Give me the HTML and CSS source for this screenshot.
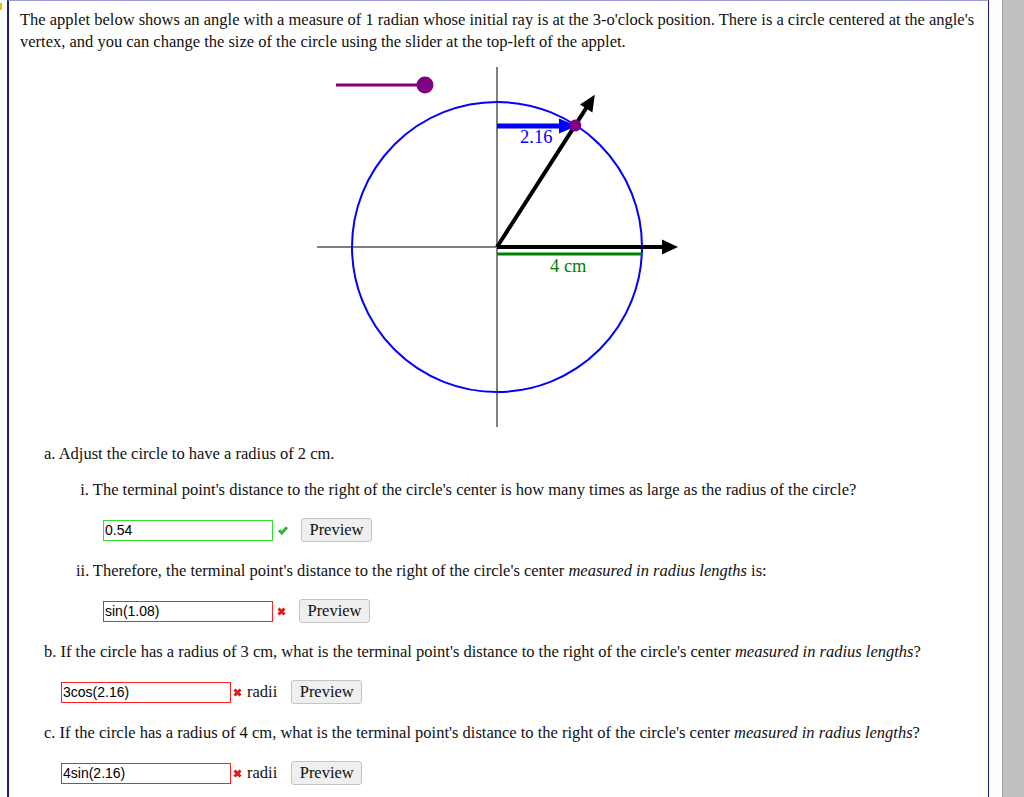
FILE: index.html
```html
<!DOCTYPE html>
<html>
<head>
<meta charset="utf-8">
<link rel="stylesheet" href="styles.css">
</head>
<body>
<div class="page">
  <div class="mark"></div>
  <div class="box">
    <p class="intro">The applet below shows an angle with a measure of 1 radian whose initial ray is at the 3-o'clock position. There is a circle centered at the angle's vertex, and you can change the size of the circle using the slider at the top-left of the applet.</p>
    <svg class="applet" width="400" height="370" viewBox="0 0 400 370">
      <line x1="36" y1="25" x2="125" y2="25" stroke="#800080" stroke-width="3"/>
      <circle cx="125" cy="25" r="8.5" fill="#800080"/>
      <line x1="197" y1="7" x2="197" y2="367" stroke="#808080" stroke-width="2"/>
      <line x1="17" y1="187" x2="197" y2="187" stroke="#808080" stroke-width="2"/>
      <circle cx="197" cy="187" r="145" fill="none" stroke="#0000ff" stroke-width="2"/>
      <line x1="197" y1="194" x2="342" y2="194" stroke="#008000" stroke-width="3"/>
      <line x1="197" y1="187" x2="365" y2="187" stroke="#000" stroke-width="4"/>
      <polygon points="378,187 362,179.5 362,194.5" fill="#000"/>
      <line x1="197" y1="187" x2="287.8" y2="45.6" stroke="#000" stroke-width="4"/>
      <polygon points="294.8,34.7 292.4,52.4 280,44.4" fill="#000"/>
      <line x1="197" y1="66" x2="262" y2="66" stroke="#0000ff" stroke-width="5"/>
      <polygon points="277,66 259,58.5 259,73.5" fill="#0000ff"/>
      <circle cx="275.3" cy="65.5" r="6" fill="#800080"/>
      <text x="220" y="83" class="lbl" fill="#0000ff">2.16</text>
      <text x="250" y="212" class="lbl" fill="#008000">4 cm</text>
    </svg>

    <p class="q qa">a. Adjust the circle to have a radius of 2 cm.</p>
    <p class="q sub"><span class="rn">i.</span> The terminal point's distance to the right of the circle's center is how many times as large as the radius of the circle?</p>
    <div class="row deep">
      <input class="ans ok" type="text" value="0.54">
      <svg class="icon ico-ok" width="10" height="10" viewBox="0 0 10 10"><path d="M1 5.2 L3.8 8 L9 2.2" fill="none" stroke="#2fb52f" stroke-width="3"/></svg>
      <button class="pv">Preview</button>
    </div>
    <p class="q sub next"><span class="rn">ii.</span> Therefore, the terminal point's distance to the right of the circle's center <em>measured in radius lengths</em> is:</p>
    <div class="row deep">
      <input class="ans bad" type="text" value="sin(1.08)">
      <svg class="icon ico-bad" width="9" height="9" viewBox="0 0 9 9"><path d="M1.5 1.5 L7.5 7.5 M7.5 1.5 L1.5 7.5" stroke="#e01818" stroke-width="3"/></svg>
      <button class="pv">Preview</button>
    </div>
    <p class="q next">b. If the circle has a radius of 3 cm, what is the terminal point's distance to the right of the circle's center <em>measured in radius lengths</em>?</p>
    <div class="row">
      <input class="ans bad" type="text" value="3cos(2.16)">
      <svg class="icon ico-bad2" width="9" height="9" viewBox="0 0 9 9"><path d="M1.5 1.5 L7.5 7.5 M7.5 1.5 L1.5 7.5" stroke="#e01818" stroke-width="3"/></svg>
      <span class="unit">radii</span>
      <button class="pv">Preview</button>
    </div>
    <p class="q next">c. If the circle has a radius of 4 cm, what is the terminal point's distance to the right of the circle's center <em>measured in radius lengths</em>?</p>
    <div class="row">
      <input class="ans bad" type="text" value="4sin(2.16)">
      <svg class="icon ico-bad2" width="9" height="9" viewBox="0 0 9 9"><path d="M1.5 1.5 L7.5 7.5 M7.5 1.5 L1.5 7.5" stroke="#e01818" stroke-width="3"/></svg>
      <span class="unit">radii</span>
      <button class="pv">Preview</button>
    </div>
  </div>
  <div class="gutter"></div>
  <div class="scrollbar"></div>
</div>
</body>
</html>
```

FILE: styles.css
```css
html, body {
  margin: 0;
  padding: 0;
  background: #fdfdfd;
}
.page {
  display: flex;
  height: 797px;
  overflow: hidden;
  font-family: "Liberation Serif", "Times New Roman", serif;
  font-size: 16.5px;
  color: #111;
}
.mark {
  width: 2px;
  height: 7px;
  margin-top: 3px;
  margin-right: 5px;
  background: #e6c200;
  flex: none;
}
.box {
  width: 966px;
  flex: none;
  background: #fff;
  border-left: 2px solid #1c1c8c;
  border-right: 1px solid #1c1c8c;
  border-top: 1px solid #9a9ad0;
  padding: 8px 2px 0 11px;
}
.intro {
  margin: 0;
  line-height: 22px;
}
.applet {
  display: block;
  margin: 7px 0 0 280px;
}
.lbl {
  font-family: "Liberation Serif", "Times New Roman", serif;
  font-size: 18.5px;
}
.q {
  margin: 13px 0 0 24px;
  line-height: 22px;
}
.sub {
  margin-top: 14px;
  margin-left: 56px;
}
.q.sub.next {
  margin-top: 18px;
}
.q.next {
  margin-top: 18px;
}
.rn {
  display: inline-block;
  width: 13px;
  text-align: right;
}
.row {
  display: flex;
  align-items: center;
  height: 24px;
  margin: 17px 0 0 41px;
}
.row.deep {
  margin-left: 83px;
}
.ans {
  box-sizing: border-box;
  width: 170px;
  height: 21px;
  margin: 0;
  padding: 0 1px;
  font-family: "Liberation Sans", Arial, sans-serif;
  font-size: 14px;
  color: #000;
  background: #fff;
  outline: none;
}
.ans.ok {
  border: 1px solid #2ee02e;
}
.ans.bad {
  border: 1px solid #ff1f1f;
}
.icon {
  flex: none;
}
.ico-ok {
  margin-left: 5px;
  margin-right: 13px;
}
.ico-bad {
  margin-left: 4px;
  margin-right: 13px;
}
.ico-bad2 {
  margin-left: 2px;
  margin-right: 5px;
}
.unit {
  margin-right: 14px;
}
.pv {
  box-sizing: border-box;
  height: 24px;
  width: 71px;
  padding: 0;
  font-family: "Liberation Serif", "Times New Roman", serif;
  font-size: 16.5px;
  color: #111;
  background: #efefef;
  border: 1px solid #c4c4c4;
  border-radius: 3px;
}
.gutter {
  flex: 1;
  background: #fdfdfd;
}
.scrollbar {
  width: 21px;
  flex: none;
  background: #c0c0c0;
  border-left: 1px solid #a2a2a2;
}
```
